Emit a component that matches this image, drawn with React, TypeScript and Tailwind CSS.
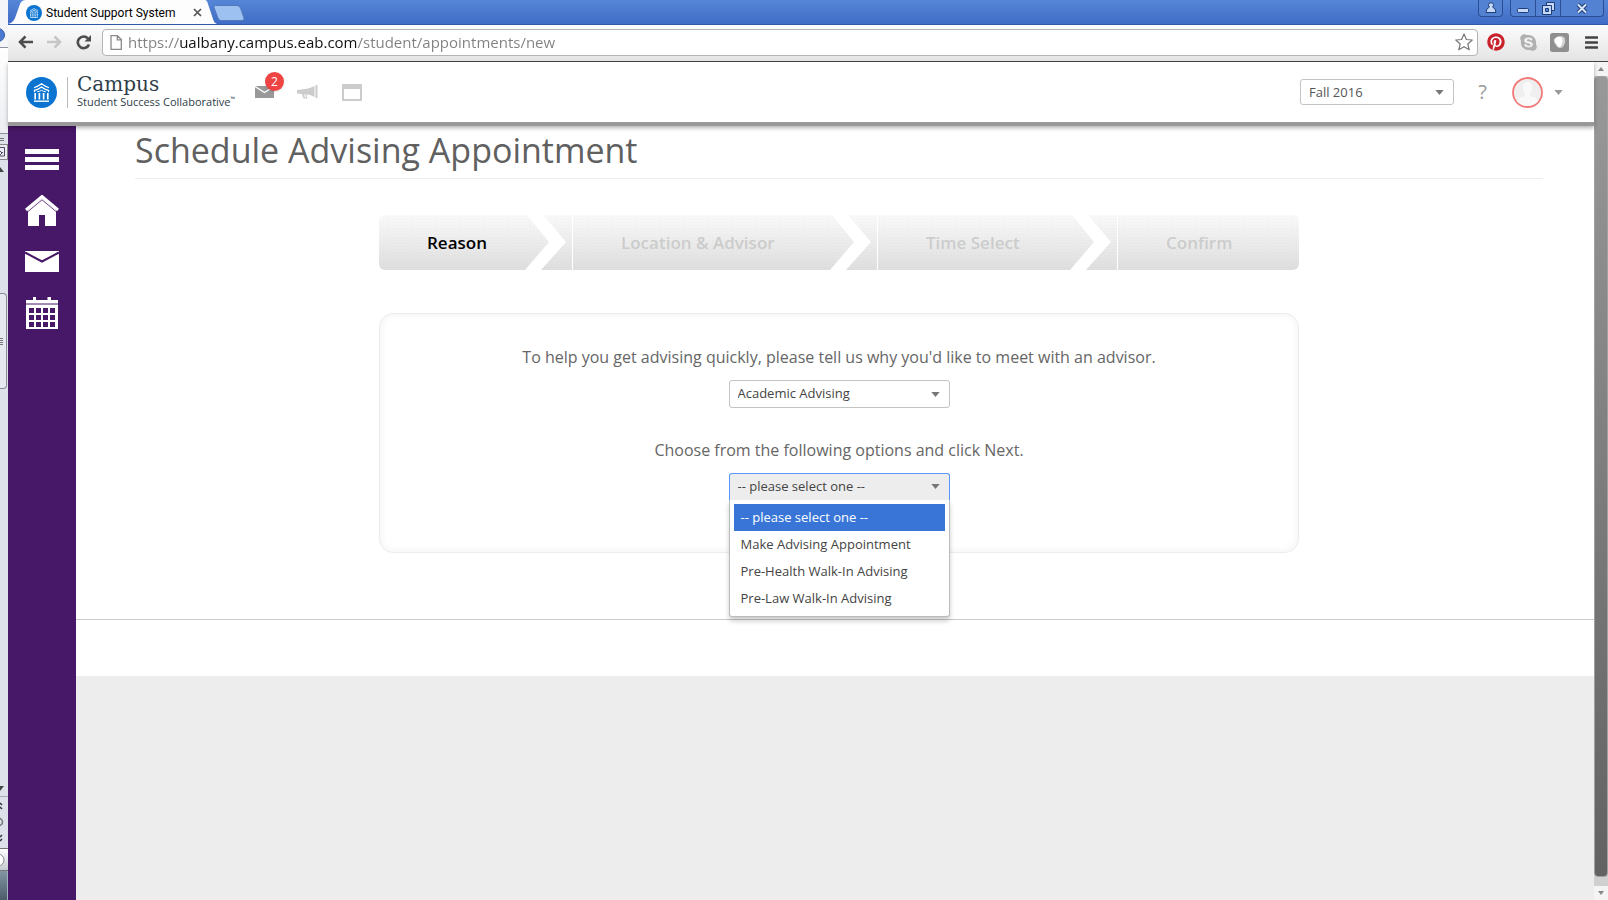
import { useState } from "react";
import { FaPinterest, FaSkype } from "react-icons/fa";

const STEPS = ["Reason", "Location & Advisor", "Time Select", "Confirm"];

const OPTIONS = [
  "-- please select one --",
  "Make Advising Appointment",
  "Pre-Health Walk-In Advising",
  "Pre-Law Walk-In Advising",
];

function Bank({ className }: { className: string }) {
  return (
    <svg viewBox="0 0 31 31" className={className} aria-hidden="true">
      <circle cx="15.5" cy="15.5" r="15.5" fill="#0b74d1" />
      <g fill="none" stroke="#fff" strokeLinecap="round">
        <path d="M8.500 10.500 Q12 9.500 15.500 6.800 Q19 9.500 22.500 10.500" strokeWidth="1.300" />
        <path d="M8.500 14.500 V13.300 Q12.500 12.500 15.500 10 Q18.500 12.500 22.500 13.300 V14.500" strokeWidth="1.300" />
        <path d="M11.500 14.800 Q14 14.500 15.500 13.300 Q17 14.500 19.500 14.800" strokeWidth="1" />
      </g>
      <path d="M9.200 16 V22.500 M13.400 16 V22.500 M17.600 16 V22.500 M21.800 16 V22.500" stroke="#fff" strokeWidth="1.700" />
      <path d="M8 24.200 H23" stroke="#fff" strokeWidth="1.400" />
    </svg>
  );
}

function Caret({ color = "#777" }: { color?: string }) {
  return (
    <svg viewBox="0 0 10 6" className="h-[5px] w-[9px]" aria-hidden="true">
      <path d="M0 0 H10 L5 6 Z" fill={color} />
    </svg>
  );
}

function TitleBar() {
  return (
    <div className="flex h-[25px] shrink-0 justify-between border-b border-[#2f5aa8] bg-gradient-to-b from-[#5586d6] to-[#3f6cc6]">
      <div className="flex items-end">
        <div className="flex h-6 items-stretch">
          <svg viewBox="0 0 18 24" className="h-6 w-[18px]" aria-hidden="true">
            <path d="M0 24 Q5 23 7 18 L12 4 Q13.500 0 18 0 V24 Z" fill="#fdfdfd" />
          </svg>
          <div className="flex items-center bg-[#fdfdfd] pt-px">
            <Bank className="h-4 w-4" />
            <span className="ml-1 w-[147px] font-['Roboto',sans-serif] text-xs text-black">Student Support System</span>
            <button aria-label="Close tab" className="flex h-4 w-3 items-center">
              <svg viewBox="0 0 9 9" className="h-[9px] w-[9px]">
                <path d="M1 1 L8 8 M8 1 L1 8" stroke="#555" strokeWidth="1.700" />
              </svg>
            </button>
          </div>
          <svg viewBox="0 0 12 24" className="h-6 w-3" aria-hidden="true">
            <path d="M0 0 Q2 0 3 4 L8 19 Q9 23 12 24 H0 Z" fill="#fdfdfd" />
          </svg>
        </div>
        <button aria-label="New tab" className="-ml-1 h-[22px]">
          <svg viewBox="0 0 32 16" className="h-4 w-8">
            <path d="M2.500 0.500 H24 Q26.500 0.500 27.500 3 L31 13 Q31.500 15.500 29 15.500 H8 Q6 15.500 5 13 L1 2.500 Q0.500 0.500 2.500 0.500 Z" fill="#9dc1f0" stroke="#5478ba" />
          </svg>
        </button>
      </div>

      <div className="flex h-[17px] gap-[7px] pr-1 text-[#c6daf8]">
        <button aria-label="Profile" className="flex w-[25px] items-center justify-center rounded-b border border-t-0 border-[#2a4f94] bg-[#5482d2]">
          <svg viewBox="0 0 12 12" className="h-3 w-3">
            <path d="M6 0.800 a2.300 2.300 0 0 1 1.500 4.200 Q11 6.500 11 10.500 H1 Q1 6.500 4.500 5 A2.300 2.300 0 0 1 6 0.800 Z" fill="#c6daf8" stroke="#1f3d78" />
          </svg>
        </button>
        <div className="flex divide-x divide-[#2a4f94] rounded-b border border-t-0 border-[#2a4f94] bg-[#5482d2]">
          <button aria-label="Minimize" className="flex w-[25px] items-end justify-center pb-[3px]">
            <svg viewBox="0 0 12 5" className="h-[5px] w-3">
              <rect x="0.500" y="0.500" width="11" height="4" rx="1" fill="#c6daf8" stroke="#1f3d78" />
            </svg>
          </button>
          <button aria-label="Restore" className="flex w-[25px] items-center justify-center">
            <svg viewBox="0 0 13 13" className="h-[13px] w-[13px]">
              <path d="M4.500 0.500 H12.500 V8.500 H4.500 Z" fill="#c6daf8" stroke="#1f3d78" />
              <path d="M0.500 3.500 H9.500 V12.500 H0.500 Z" fill="#c6daf8" stroke="#1f3d78" />
              <path d="M3.500 6.500 H6.500 V9.500 H3.500 Z" fill="#5482d2" stroke="#1f3d78" />
            </svg>
          </button>
          <button aria-label="Close" className="flex w-[42px] items-center justify-center">
            <svg viewBox="0 0 12 11" className="h-[11px] w-3">
              <path d="M2 1.500 L10 9.500 M10 1.500 L2 9.500" stroke="#1f3d78" strokeWidth="4" />
              <path d="M2 1.500 L10 9.500 M10 1.500 L2 9.500" stroke="#d6e4fa" strokeWidth="2" />
            </svg>
          </button>
        </div>
      </div>
    </div>
  );
}

function Toolbar() {
  return (
    <div className="flex h-[37px] shrink-0 items-center border-b border-[#444] bg-gradient-to-b from-[#fcfcfc] to-[#e4e4e4] px-[10px] pb-[2px]">
      <div className="flex w-[84px] gap-[14px]">
        <button aria-label="Back">
          <svg viewBox="0 0 15 14" className="h-[14px] w-[15px]">
            <path d="M15 7 H2.500 M7.500 1.300 L2 7 L7.500 12.700" fill="none" stroke="#4d4d4d" strokeWidth="2.600" />
          </svg>
        </button>
        <button aria-label="Forward">
          <svg viewBox="0 0 15 14" className="h-[14px] w-[15px]">
            <path d="M0 7 H12.500 M7.500 1.300 L13 7 L7.500 12.700" fill="none" stroke="#c6c6c6" strokeWidth="2.600" />
          </svg>
        </button>
        <button aria-label="Reload">
          <svg viewBox="0 0 15 15" className="h-[15px] w-[15px]">
            <path d="M12 3.500 A5.800 5.800 0 1 0 13 9.500" fill="none" stroke="#4d4d4d" strokeWidth="2.600" />
            <path d="M15 0 V6.500 H8.500 Z" fill="#4d4d4d" />
          </svg>
        </button>
      </div>

      <div className="flex h-[27px] grow items-center rounded-sm border border-[#b4b4b4] bg-white pr-1 pl-[7px]">
        <svg viewBox="0 0 12 15" className="h-[15px] w-3" aria-hidden="true">
          <path d="M1 0.700 H7.500 L11.300 4.500 V14.300 H1 Z M7.300 0.700 V4.800 H11.300" fill="#fff" stroke="#8a8a8a" strokeWidth="1.300" />
        </svg>
        {/* scheme and path are grey, the host is black */}
        <input
          aria-label="Address"
          defaultValue="https://ualbany.campus.eab.com/student/appointments/new"
          className="ml-[6px] grow bg-[linear-gradient(90deg,#808080_52px,#111_52px,#111_229px,#808080_229px)] bg-clip-text text-[15px] text-transparent outline-none"
        />
        <button aria-label="Bookmark">
          <svg viewBox="0 0 18 18" className="h-[18px] w-[18px]">
            <path d="M9 1 L11.400 6.500 L17.200 7 L12.800 11 L14.200 16.800 L9 13.700 L3.800 16.800 L5.200 11 L0.800 7 L6.600 6.500 Z" fill="#fff" stroke="#777" strokeWidth="1.200" strokeLinejoin="round" />
          </svg>
        </button>
      </div>

      <div className="flex items-center pl-[9px]">
        <button aria-label="Pinterest" className="mr-[14px] rounded-full bg-white text-lg text-[#c8232c]">
          <FaPinterest />
        </button>
        <button aria-label="Skype" className="mr-3 text-[19px] text-[#b0b0b0]">
          <FaSkype />
        </button>
        <button aria-label="Extension" className="mr-4">
          <svg viewBox="0 0 19 19" className="h-[19px] w-[19px]">
            <rect width="19" height="19" rx="2.500" fill="#8f8f8f" />
            <path d="M4 6 Q9 1 14 4 Q17 8 13 14 Q8 17 6 12 Q3 9 4 6 Z" fill="#d0d0d0" />
            <path d="M5 6 Q8 2 12 5 Q14 9 10 14 Q7 14 6.500 11 Q4 9 5 6 Z" fill="#fff" />
          </svg>
        </button>
        <button aria-label="Menu">
          <svg viewBox="0 0 13 13" className="h-[13px] w-[13px]">
            <path d="M1 1.500 H12 M1 6.500 H12 M1 11.500 H12" stroke="#444" strokeWidth="2.600" strokeLinecap="round" />
          </svg>
        </button>
      </div>
    </div>
  );
}

function Header() {
  return (
    <header className="relative z-10 flex h-16 shrink-0 items-center border-b-4 border-[#999] bg-white pl-[18px] shadow-[0_2px_4px_rgba(0,0,0,0.3)]">
      <a href="#home" className="flex items-center">
        <Bank className="h-[31px] w-[31px]" />
        <span className="ml-[10px] h-[31px] border-l border-[#bbb]" />
        <span className="ml-[9px] flex w-[178px] flex-col text-[#2f3d48]">
          <span className="font-['DejaVu_Serif',serif] text-xl leading-5">Campus</span>
          <span className="flex text-[11px] leading-4 whitespace-nowrap">
            Student Success Collaborative<span className="text-[6px] leading-[10px]">™</span>
          </span>
        </span>
      </a>

      <button aria-label="Messages" className="relative">
        <svg viewBox="0 0 19 12" className="h-3 w-[19px]">
          <rect width="19" height="12" fill="#999" />
          <path d="M0 0.500 L9.500 6.500 L19 0.500" fill="none" stroke="#fff" strokeWidth="1.300" />
        </svg>
        <span className="absolute -top-[14px] left-[10px] flex h-[19px] w-[19px] items-center justify-center rounded-full bg-[#ef4444] text-[12px] text-white shadow-sm">2</span>
      </button>
      <button aria-label="Announcements" className="ml-[23px]">
        <svg viewBox="0 0 21 14" className="h-[14px] w-[21px]">
          <path d="M0 5 L4 4.500 Q12 4 17.500 1 V12 Q13 9.500 9.500 9.300 L10.500 13.500 H6.500 L5 9 L0 8.500 Z M18.500 0 H20.500 V13 H18.500 Z" fill="#ccc" />
          <path d="M7 9.500 L8 12.500 H9.200 L8.400 9.500 Z" fill="#fff" />
        </svg>
      </button>
      <button aria-label="Calendar" className="ml-6">
        <svg viewBox="0 0 20 17" className="h-[17px] w-5">
          <path d="M1 1 H19 V16 H1 Z" fill="#fff" stroke="#ccc" strokeWidth="2" />
          <path d="M0 0 H20 V5 H0 Z" fill="#ccc" />
        </svg>
      </button>

      <div className="ml-auto flex items-center pr-[31px]">
        <div className="relative flex items-center">
          <select aria-label="Term" className="h-[26px] w-[154px] appearance-none rounded-[3px] border border-[#c4c4c4] bg-white pt-px pl-2 text-[13px] text-[#555]">
            <option>Fall 2016</option>
          </select>
          <span className="pointer-events-none absolute right-[10px]"><Caret /></span>
        </div>
        <button aria-label="Help" className="ml-6 w-[9px] text-xl leading-5 text-[#999]">?</button>
        <button aria-label="Account" className="ml-[25px] flex items-center gap-[11px]">
          <svg viewBox="0 0 31 31" className="h-[31px] w-[31px]">
            <circle cx="15.500" cy="15.500" r="14.500" fill="#efefef" stroke="#f27a7a" strokeWidth="1.800" />
            <path d="M15.500 5 Q20 5 20 10 Q20 15 17.800 17 V19 Q24 20 26.500 24 Q22 29 15.500 29 Q9 29 4.500 24 Q7 20 13.200 19 V17 Q11 15 11 10 Q11 5 15.500 5 Z" fill="#f9f9f9" />
          </svg>
          <Caret color="#999" />
        </button>
      </div>
    </header>
  );
}

function Sidebar() {
  return (
    <nav className="flex w-[68px] shrink-0 flex-col items-center bg-[#471768] pt-[23px]">
      <a href="#menu" aria-label="Menu">
        <svg viewBox="0 0 34 21" className="h-[21px] w-[34px]" fill="#fff">
          <path d="M0 0 H34 V5 H0 Z M0 8 H34 V13 H0 Z M0 16 H34 V21 H0 Z" />
        </svg>
      </a>
      <a href="#home" aria-label="Home" className="mt-[25px]">
        <svg viewBox="0 0 34 32" className="h-8 w-[34px]">
          <path d="M3 15 L17 3 L31 15 V31 H20 V20 H14 V31 H3 Z" fill="#fff" />
          <path d="M1 15 L17 1.500 L33 15" fill="none" stroke="#fff" strokeWidth="3" />
          <path d="M3 16.500 L17 4.800 L31 16.500" fill="none" stroke="#471768" strokeWidth="0.800" />
        </svg>
      </a>
      <a href="#mail" aria-label="Mail" className="mt-6">
        <svg viewBox="0 0 34 21" className="h-[21px] w-[34px]">
          <rect width="34" height="21" fill="#fff" />
          <path d="M0 1.500 L17 10.500 L34 1.500" fill="none" stroke="#471768" strokeWidth="2" />
        </svg>
      </a>
      <a href="#calendar" aria-label="Calendar" className="mt-6">
        <svg viewBox="0 0 32 33" className="h-[33px] w-8">
          <path d="M0 4 H7 V1 H10 V4 H21.500 V1 H25 V4 H32 V33 H0 Z" fill="#fff" />
          <path d="M0 8 H32" stroke="#471768" />
          <path d="M3 14.500 H29 M3 21.500 H29 M3 28.500 H29" stroke="#471768" strokeWidth="5" strokeDasharray="5 2" />
        </svg>
      </a>
    </nav>
  );
}

function StepBar() {
  return (
    <ol className="grid grid-cols-[194fr_305fr_240fr_181fr] overflow-hidden rounded-md">
      {STEPS.map((step, i) => (
        <li
          key={step}
          className={`flex h-[55px] items-center border-white bg-[radial-gradient(rgba(0,0,0,0.025)_1px,transparent_1px),linear-gradient(#f9f9f9,#dedede)] bg-[size:3px_3px,100%_100%] pl-12 text-[17px] font-semibold ${i < 3 ? "border-r" : ""} ${i === 0 ? "text-black" : "text-[#ccc]"}`}
        >
          {step}
          {i < 3 && (
            <svg viewBox="0 0 41 55" className="mr-[6px] ml-auto h-[55px] w-[41px]" aria-hidden="true">
              <path d="M2 0 H18 L41 27 L16 55 H0 L24 27 Z" fill="#fff" />
            </svg>
          )}
        </li>
      ))}
    </ol>
  );
}

// the strip of the window that lies behind the browser
function BackWindow() {
  return (
    <div className="flex w-2 shrink-0 flex-col overflow-hidden bg-[#dce1ea]">
      <div className="flex h-12 flex-col items-start justify-end border-b border-[#8b919b] bg-[#f3f5f9] pb-[5px]">
        <svg viewBox="0 0 5 14" className="h-[14px] w-[5px]" aria-hidden="true">
          <circle cx="-2" cy="7" r="6.500" fill="#4a7bd0" stroke="#2d5aa8" />
        </svg>
      </div>
      <div className="h-[86px] border-b border-[#8b919b] bg-gradient-to-b from-white to-[#eceef2]" />
      <div className="mt-1 h-[3px] w-1 border-y border-[#777]" />
      <div className="mt-[3px] flex h-4 items-center border border-l-0 border-[#888] bg-[#e8ebf1]">
        <svg viewBox="0 0 5 10" className="h-[10px] w-[5px]" aria-hidden="true">
          <path d="M0 0.500 H4.500 V9 H0 M0 4 L2 6 M0 8 L3 5" fill="none" stroke="#554a5c" />
        </svg>
      </div>
      <svg viewBox="0 0 4 5" className="mt-[7px] h-[5px] w-1" aria-hidden="true">
        <path d="M0 0 L4 5 H0 Z" fill="#444" />
      </svg>
      <div className="mt-[121px] flex h-24 w-[7px] shrink-0 items-center rounded-r-sm border border-l-0 border-[#868b95] bg-[#e6e9ef]">
        <div className="h-[7px] w-[3px] bg-[repeating-linear-gradient(#777_0_1px,transparent_1px_2px)]" />
      </div>
      <div className="mt-auto h-[11px] border-b border-[#a3a9b5]">
        <svg viewBox="0 0 4 5" className="h-[5px] w-1" aria-hidden="true">
          <path d="M0 0 H4 L0 5 Z" fill="#444" />
        </svg>
      </div>
      <svg viewBox="0 0 8 51" className="h-[51px] w-2 shrink-0" aria-hidden="true">
        <path d="M0 6 L2 8 M0 10 L2 12 M0 44 L2 42 M0 40 L2 38" stroke="#333" strokeWidth="1.500" />
        <circle cx="-1" cy="25" r="3.500" fill="none" stroke="#777" strokeWidth="1.500" />
      </svg>
      <div className="flex h-[23px] items-center border-y border-[#777] bg-gradient-to-b from-white to-[#c4c9d2]">
        <svg viewBox="0 0 5 14" className="h-[14px] w-[5px]" aria-hidden="true">
          <circle cx="-2" cy="7" r="6" fill="#fff" stroke="#888" />
        </svg>
      </div>
      <div className="h-[29px] border-r border-[#9fb0bd] bg-gradient-to-b from-[#8395a3] to-[#4d5c6b]" />
    </div>
  );
}

function ScrollBar() {
  return (
    <div className="flex w-[14px] shrink-0 flex-col bg-[#d0d0d0]">
      <button aria-label="Scroll up" className="flex h-[14px] items-center justify-center bg-[#f4f4f4]">
        <svg viewBox="0 0 6 4" className="h-1 w-[6px]"><path d="M0 4 L3 0 L6 4 Z" fill="#888" /></svg>
      </button>
      <div className="mb-[9px] grow rounded-sm border border-[#a0a0a0] bg-gradient-to-b from-[#999] to-[#626262]" />
      <button aria-label="Scroll down" className="flex h-[14px] items-center justify-center bg-[#f4f4f4]">
        <svg viewBox="0 0 6 4" className="h-1 w-[6px]"><path d="M0 0 L3 4 L6 0 Z" fill="#888" /></svg>
      </button>
    </div>
  );
}

export default function App() {
  const [option, setOption] = useState(OPTIONS[0]);

  return (
    <div className="flex h-screen overflow-hidden bg-white font-['Open_Sans',sans-serif]">
      <BackWindow />

      <div className="flex grow flex-col">
        <TitleBar />
        <Toolbar />

        <div className="flex min-h-0 grow">
          <div className="flex grow flex-col">
            <Header />

            <div className="flex grow">
              <Sidebar />

              <main className="flex grow flex-col bg-[#ededed]">
                <div className="border-b border-[#ccc] bg-white pr-[51px] pb-[66px] pl-[59px]">
                  <h1 className="border-b border-[#eee] pt-1 pb-2 text-[34px] leading-10 text-[#606060]">
                    Schedule Advising Appointment
                  </h1>

                  <div className="mx-auto mt-9 max-w-[920px]">
                    <StepBar />

                    <div className="mt-[43px] flex flex-col items-center rounded-[14px] border border-[#ececec] pt-[31px] pb-[52px] text-base text-[#666] shadow-[inset_0_0_8px_rgba(0,0,0,0.06)]">
                      <label htmlFor="reason" className="leading-6">
                        To help you get advising quickly, please tell us why you'd like to meet with an advisor.
                      </label>
                      <div className="relative mt-[11px] flex items-center">
                        <select id="reason" className="h-7 w-[221px] appearance-none rounded-[3px] border border-[#c4c4c4] bg-white pl-2 text-[13px] text-[#444]">
                          <option>Academic Advising</option>
                        </select>
                        <span className="pointer-events-none absolute right-[10px]"><Caret /></span>
                      </div>

                      <label htmlFor="option" className="mt-[30px] leading-6">
                        Choose from the following options and click Next.
                      </label>
                      <div className="relative mt-[11px] flex items-center">
                        <select
                          id="option"
                          value={option}
                          onChange={(e) => setOption(e.target.value)}
                          className="h-[27px] w-[221px] appearance-none rounded-t-[3px] border border-b-0 border-[#5897fb] bg-[#ededed] pl-2 text-[13px] text-[#444]"
                        >
                          {OPTIONS.map((o) => <option key={o}>{o}</option>)}
                        </select>
                        <span className="pointer-events-none absolute right-[10px]"><Caret /></span>

                        <ul className="absolute top-full left-0 z-10 w-full rounded-b-[3px] border border-t-0 border-[#bbb] bg-white p-1 shadow-[0_4px_5px_rgba(0,0,0,0.2)]">
                          {OPTIONS.map((o) => (
                            <li key={o}>
                              <button
                                onClick={() => setOption(o)}
                                className={`block h-[27px] w-full pl-[7px] text-left text-[13px] ${o === option ? "bg-[#3875d7] font-medium text-white" : "text-[#444]"}`}
                              >
                                {o}
                              </button>
                            </li>
                          ))}
                        </ul>
                      </div>
                    </div>
                  </div>
                </div>
                <div className="h-14 bg-white" />
              </main>
            </div>
          </div>

          <ScrollBar />
        </div>
      </div>
    </div>
  );
}
